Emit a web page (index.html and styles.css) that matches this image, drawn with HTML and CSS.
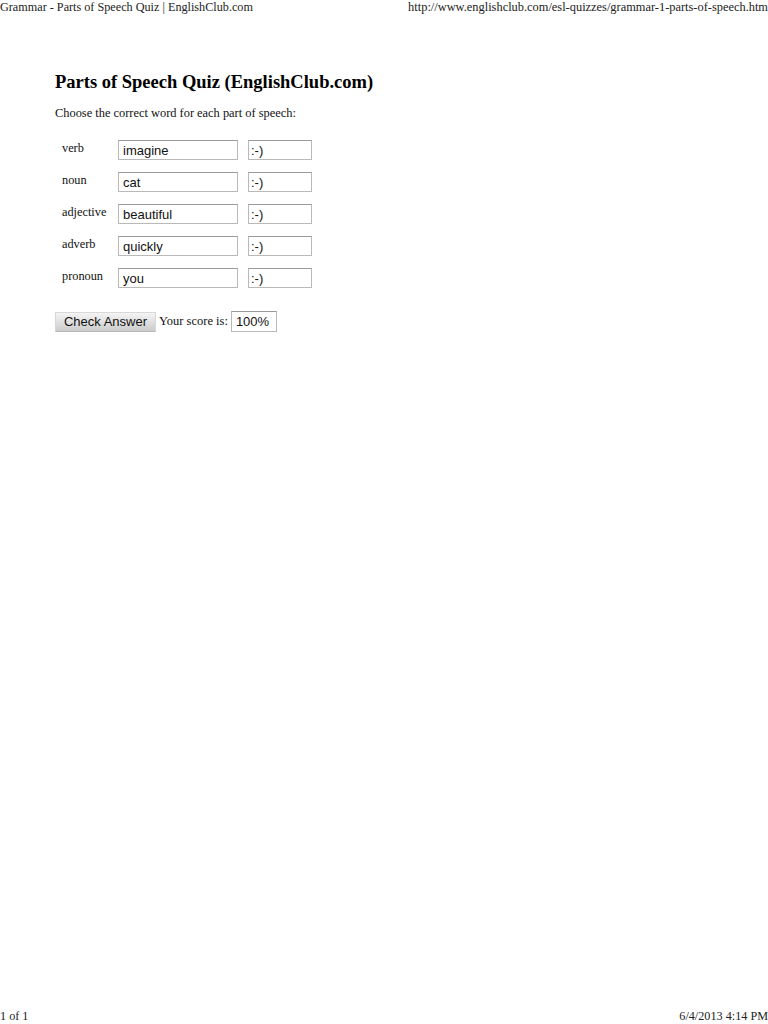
FILE: index.html
```html
<!DOCTYPE html>
<html>
<head>
<meta charset="utf-8">
<title>Grammar - Parts of Speech Quiz | EnglishClub.com</title>
<link rel="stylesheet" href="styles.css">
</head>
<body>
<div class="page">
  <header class="print-head">
    <span class="doc-title">Grammar - Parts of Speech Quiz | EnglishClub.com</span>
    <span class="doc-url">http://www.englishclub.com/esl-quizzes/grammar-1-parts-of-speech.htm</span>
  </header>
  <main class="content">
    <h1 class="quiz-title">Parts of Speech Quiz (EnglishClub.com)</h1>
    <p class="intro">Choose the correct word for each part of speech:</p>
    <div class="quiz-grid">
      <span class="label">verb</span><span class="field answer">imagine</span><span class="field result">:-)</span>
      <span class="label">noun</span><span class="field answer">cat</span><span class="field result">:-)</span>
      <span class="label">adjective</span><span class="field answer">beautiful</span><span class="field result">:-)</span>
      <span class="label">adverb</span><span class="field answer">quickly</span><span class="field result">:-)</span>
      <span class="label">pronoun</span><span class="field answer">you</span><span class="field result">:-)</span>
    </div>
    <div class="score-row">
      <span class="btn">Check Answer</span>
      <span class="score-label">Your score is:</span>
      <span class="field score">100%</span>
    </div>
  </main>
  <footer class="print-foot">
    <span>1 of 1</span>
    <span>6/4/2013 4:14 PM</span>
  </footer>
</div>
</body>
</html>
```
FILE: styles.css
```css
html, body {
  margin: 0;
  padding: 0;
  background: #fff;
}
body {
  font-family: "Liberation Serif", "Times New Roman", serif;
  color: #000;
}
.page {
  width: 768px;
  height: 1024px;
  display: flex;
  flex-direction: column;
}
.print-head {
  display: flex;
  justify-content: space-between;
  font-size: 12.2px;
  line-height: 14px;
  color: #222;
  white-space: nowrap;
  overflow: hidden;
}
.doc-url {
  font-size: 12.4px;
}
.content {
  flex: 1;
  padding: 56px 0 0 55px;
}
.quiz-title {
  margin: 0;
  font-size: 18.5px;
  line-height: 24px;
  font-weight: bold;
}
.intro {
  margin: 12px 0 0 0;
  font-size: 12.4px;
  line-height: 14px;
  color: #111;
}
.quiz-grid {
  margin: 20px 0 0 7px;
  display: grid;
  grid-template-columns: 46px 120px 64px;
  column-gap: 10px;
  row-gap: 12px;
  align-items: start;
}
.label {
  font-size: 12.3px;
  line-height: 14px;
  padding-top: 1px;
  color: #111;
  white-space: nowrap;
}
.field {
  box-sizing: border-box;
  height: 20px;
  border: 1px solid #b9b9b9;
  border-top-color: #9a9a9a;
  background: #fff;
  font-family: "Liberation Sans", Arial, sans-serif;
  font-size: 13px;
  line-height: 18px;
  color: #111;
  padding: 1px 0 0 4px;
  white-space: nowrap;
}
.result {
  padding-left: 2px;
}
.score-row {
  margin-top: 23px;
  display: flex;
  align-items: center;
}
.btn {
  box-sizing: border-box;
  width: 101px;
  height: 20px;
  border: 1px solid #d8d8d8;
  border-bottom-color: #b8b8b8;
  background: linear-gradient(#f4f4f4, #dcdcdc 60%, #cacaca);
  font-family: "Liberation Sans", Arial, sans-serif;
  font-size: 13px;
  line-height: 18px;
  text-align: center;
  color: #111;
}
.score-label {
  font-size: 12.5px;
  margin: 0 3px 0 3px;
  color: #111;
}
.score {
  width: 46px;
  height: 21px;
}
.print-foot {
  display: flex;
  justify-content: space-between;
  font-size: 12.2px;
  line-height: 14px;
  color: #222;
  padding-bottom: 1px;
}
```
